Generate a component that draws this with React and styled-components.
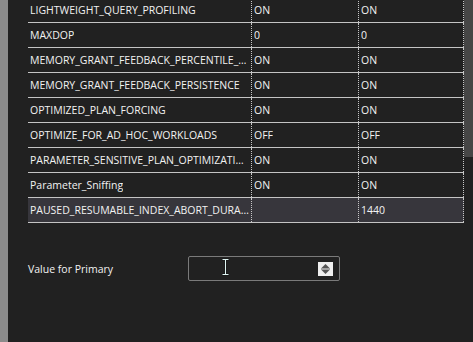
import React from "react";
import styled, { createGlobalStyle } from "styled-components";

const Global = createGlobalStyle`
  html, body { margin: 0; padding: 0; background: #212121; overflow: hidden; }
  #root { width: 473px; height: 342px; }
`;

const Page = styled.div`
  display: flex;
  width: 473px;
  height: 342px;
  background: #212121;
  font-family: "Open Sans", "Noto Sans", sans-serif;
  font-size: 10.5px;
  color: #f2f2f2;
`;

const Strip = styled.div`
  width: 8px;
  flex: none;
  background: #8b8b8b;
`;

const Main = styled.div`
  flex: 1;
  display: flex;
  flex-direction: column;
  padding-left: 20px;
`;

const TableArea = styled.div`
  display: flex;
`;

const Table = styled.div`
  width: 436px;
  margin-top: -2px;
`;

const Scroll = styled.div`
  width: 9px;
  flex: none;
  display: flex;
  flex-direction: column;
`;

const Thumb = styled.div`
  height: 157px;
  background: #464646;
`;

const Row = styled.div`
  display: grid;
  grid-template-columns: 223px 107px 106px;
  height: 24px;
  border-bottom: 1px solid #c4c4c4;
  background: ${(p) => (p.$selected ? "#37363c" : "transparent")};
`;

const Cell = styled.div`
  display: flex;
  align-items: center;
  padding: 0 2px 1px 2px;
  overflow: hidden;
  white-space: nowrap;
  min-width: 0;
  border-left: ${(p) => (p.$divider ? "1px dotted #c8c8c8" : "none")};
  border-right: ${(p) => (p.$last ? "1px dotted #c8c8c8" : "none")};
`;

const CellText = styled.span`
  overflow: hidden;
  text-overflow: ellipsis;
  white-space: nowrap;
`;

const FieldRow = styled.div`
  display: flex;
  align-items: center;
  margin-top: 33px;
`;

const Label = styled.div`
  width: 160px;
`;

const Input = styled.div`
  position: relative;
  width: 144px;
  height: 23px;
  border: 1px solid #7a7a7a;
  border-radius: 2px;
  display: flex;
  align-items: center;
  justify-content: flex-end;
  padding-right: 6px;
  box-sizing: content-box;
`;

const Spinner = styled.div`
  width: 15px;
  height: 14px;
  background: #efefef;
  display: flex;
  align-items: center;
  justify-content: center;
`;

const Cursor = styled.svg`
  position: absolute;
  left: 32px;
  top: 1px;
`;

const rows = [
  ["LIGHTWEIGHT_QUERY_PROFILING", "ON", "ON"],
  ["MAXDOP", "0", "0"],
  ["MEMORY_GRANT_FEEDBACK_PERCENTILE_GRANT", "ON", "ON"],
  ["MEMORY_GRANT_FEEDBACK_PERSISTENCE", "ON", "ON"],
  ["OPTIMIZED_PLAN_FORCING", "ON", "ON"],
  ["OPTIMIZE_FOR_AD_HOC_WORKLOADS", "OFF", "OFF"],
  ["PARAMETER_SENSITIVE_PLAN_OPTIMIZATION", "ON", "ON"],
  ["Parameter_Sniffing", "ON", "ON"],
  ["PAUSED_RESUMABLE_INDEX_ABORT_DURATION_MINUTES", "", "1440", true],
];

export default function App() {
  return (
    <>
      <Global />
      <Page>
        <Strip />
        <Main>
          <TableArea>
            <Table>
              {rows.map(([name, a, b, sel]) => (
                <Row key={name} $selected={sel}>
                  <Cell><CellText>{name}</CellText></Cell>
                  <Cell $divider><CellText>{a}</CellText></Cell>
                  <Cell $divider $last><CellText>{b}</CellText></Cell>
                </Row>
              ))}
            </Table>
            <Scroll>
              <Thumb />
            </Scroll>
          </TableArea>
          <FieldRow>
            <Label>Value for Primary</Label>
            <Input>
              <Cursor width="9" height="18" viewBox="0 0 9 18">
                <path d="M1 1.5h7M4.5 1.5v15M1 16.5h7" stroke="#1a1a1a" strokeWidth="2.5" fill="none" />
                <path d="M1.5 1.5h6M4.5 1.5v15M1.5 16.5h6" stroke="#dff5f2" strokeWidth="1" fill="none" />
              </Cursor>
              <Spinner>
                <svg width="9" height="12" viewBox="0 0 9 12">
                  <path d="M4.5 1L8.5 5H0.5Z" fill="#555" />
                  <path d="M0.5 7H8.5L4.5 11Z" fill="#555" />
                  <rect x="0" y="5.5" width="9" height="1" fill="#555" />
                </svg>
              </Spinner>
            </Input>
          </FieldRow>
        </Main>
      </Page>
    </>
  );
}
